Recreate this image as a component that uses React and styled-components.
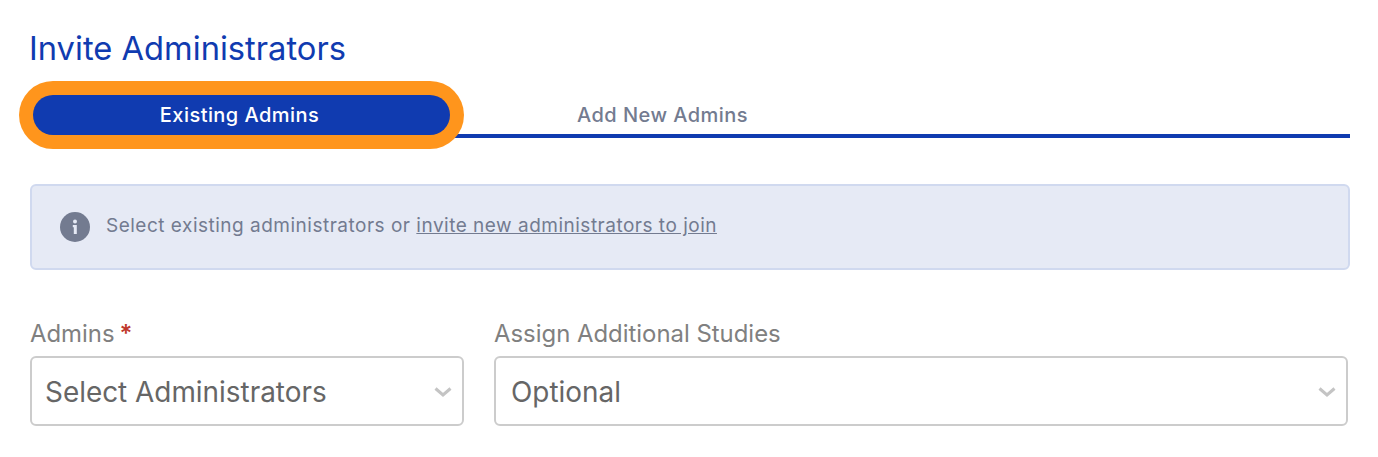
import React from 'react'
import styled, { createGlobalStyle } from 'styled-components'

const GlobalStyle = createGlobalStyle`
  html, body {
    margin: 0;
    background: #fff;
    font-family: Inter, "Liberation Sans", sans-serif;
  }
`

const Page = styled.div`
  width: 1320px;
  padding: 29px 28px 0 30px;
`

const Title = styled.h1`
  margin: 0 0 0 -1px;
  font-size: 32.7px;
  font-weight: 400;
  line-height: 38px;
  color: #103bb0;
`

const TabBar = styled.div`
  display: flex;
  gap: 4px;
  height: 39px;
  margin-top: 28px;
  padding-left: 3px;
  border-bottom: 4px solid #103bb0;
`

const Tab = styled.div`
  width: 417px;
  height: 40px;
  box-sizing: border-box;
  padding-right: ${p => (p.$active ? '4px' : '0')};
  display: flex;
  align-items: center;
  justify-content: center;
  font-size: 20px;
  font-weight: 450;
  letter-spacing: 0.45px;
  border-radius: 20px;
  color: ${p => (p.$active ? '#fff' : '#737b90')};
  background: ${p => (p.$active ? '#103bb0' : 'transparent')};
  box-shadow: ${p => (p.$active ? '0 0 0 14px #ff951c' : 'none')};
`

const Alert = styled.div`
  display: flex;
  align-items: center;
  gap: 16px;
  height: 86px;
  box-sizing: border-box;
  margin-top: 46px;
  padding-left: 28px;
  background: #e6eaf5;
  border: 2px solid #d0d9ef;
  border-radius: 6px;
  font-size: 19px;
  letter-spacing: 0.5px;
  color: #737b90;

  a {
    color: inherit;
    text-decoration: underline;
  }
`

const AlertText = styled.div`
  margin-bottom: 3px;
`

const Fields = styled.div`
  display: grid;
  grid-template-columns: 434px 854px;
  gap: 30px;
  margin-top: 50px;
`

const Label = styled.div`
  font-size: 23.9px;
  line-height: 28px;
  margin-bottom: 8px;
  color: #808080;

  span {
    margin-left: 5px;
    color: #c0392b;
    font-weight: 600;
  }
`

const Select = styled.div`
  display: flex;
  align-items: center;
  justify-content: space-between;
  height: 70px;
  box-sizing: border-box;
  padding: 2px 10px 0 ${p => (p.$multi ? '13px' : '15px')};
  border: 2px solid #ccc;
  border-radius: 6px;
  font-size: 27.9px;
  color: #666;
`

const InfoIcon = () => (
  <svg width="30" height="30" viewBox="0 0 30 30">
    <circle cx="15" cy="15" r="15" fill="#737b90" />
    <circle cx="15" cy="9.500" r="2" fill="#e6eaf5" />
    <path d="M12.800 13h4v9h-3v-6.800h-1z" fill="#e6eaf5" />
  </svg>
)

const Chevron = () => (
  <svg width="18" height="10" viewBox="0 0 18 10">
    <path d="M1.500 1.500 9 8l7.500-6.500" fill="none" stroke="#c4c4c4" strokeWidth="3" />
  </svg>
)

export default function App() {
  return (
    <Page>
      <GlobalStyle />
      <Title>Invite Administrators</Title>
      <TabBar>
        <Tab $active>Existing Admins</Tab>
        <Tab>Add New Admins</Tab>
      </TabBar>
      <Alert>
        <InfoIcon />
        <AlertText>
          Select existing administrators or <a href="#invite">invite new administrators to join</a>
        </AlertText>
      </Alert>
      <Fields>
        <div>
          <Label>Admins<span>*</span></Label>
          <Select $multi>Select Administrators<Chevron /></Select>
        </div>
        <div>
          <Label>Assign Additional Studies</Label>
          <Select>Optional<Chevron /></Select>
        </div>
      </Fields>
    </Page>
  )
}
